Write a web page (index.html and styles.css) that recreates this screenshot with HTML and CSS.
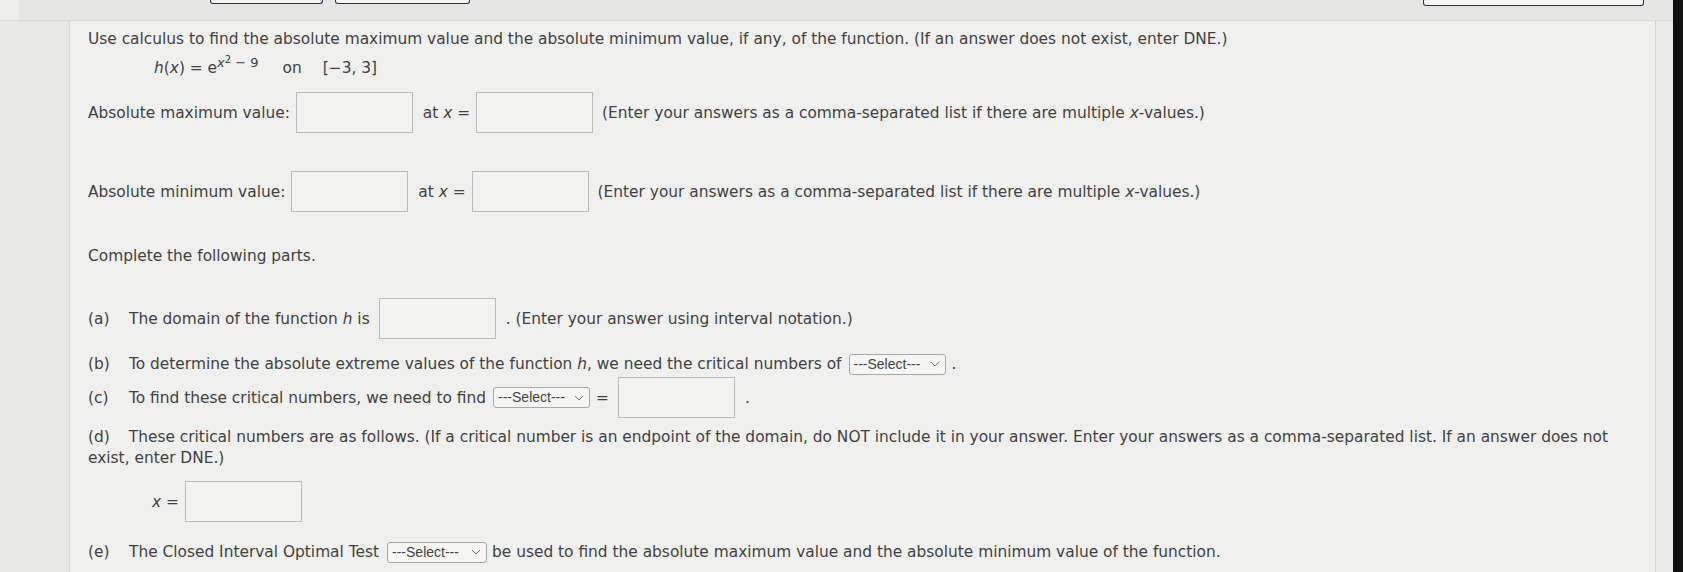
FILE: index.html
```html
<!DOCTYPE html>
<html lang="en">
<head>
<meta charset="utf-8">
<title>Absolute extrema</title>
<link rel="stylesheet" href="styles.css">
</head>
<body>
<div class="screen">
  <div class="topbar">
    <div class="tb-corner"></div>
    <div class="tb-btn tb-b1"></div>
    <div class="tb-btn tb-b2"></div>
    <div class="tb-spacer"></div>
    <div class="tb-btn tb-b3"></div>
    <div class="tb-end"></div>
  </div>
  <div class="main">
    <div class="leftcol"></div>
    <div class="panel">
      <p class="line intro">Use calculus to find the absolute maximum value and the absolute minimum value, if any, of the function. (If an answer does not exist, enter DNE.)</p>
      <p class="line formula"><span class="math"><i>h</i>(<i>x</i>) = e<sup><i>x</i><sup class="sup2">2</sup> − 9</sup></span><span class="on">on</span><span class="interval">[−3, 3]</span></p>

      <div class="row row-max">
        <span class="lbl">Absolute maximum value:</span>
        <span class="ans ans-first"></span>
        <span class="atx">at <i>x</i> =</span>
        <span class="ans"></span>
        <span class="note">(Enter your answers as a comma-separated list if there are multiple <i>x</i>-values.)</span>
      </div>

      <div class="row row-min">
        <span class="lbl">Absolute minimum value:</span>
        <span class="ans ans-first"></span>
        <span class="atx">at <i>x</i> =</span>
        <span class="ans"></span>
        <span class="note">(Enter your answers as a comma-separated list if there are multiple <i>x</i>-values.)</span>
      </div>

      <p class="line complete">Complete the following parts.</p>

      <div class="part part-a">
        <span class="tag">(a)</span>
        <span>The domain of the function <i>h</i> is</span>
        <span class="ans"></span>
        <span>. (Enter your answer using interval notation.)</span>
      </div>

      <div class="part part-b">
        <span class="tag">(b)</span>
        <span>To determine the absolute extreme values of the function <i>h</i>, we need the critical numbers of</span>
        <span class="sel"><span class="sel-text">---Select---</span><svg class="chev" viewBox="0 0 10 6" width="10" height="6"><path d="M1 1 L5 5 L9 1" fill="none" stroke="#777" stroke-width="1"/></svg></span>
        <span>.</span>
      </div>

      <div class="part part-c">
        <span class="tag">(c)</span>
        <span>To find these critical numbers, we need to find</span>
        <span class="sel"><span class="sel-text">---Select---</span><svg class="chev" viewBox="0 0 10 6" width="10" height="6"><path d="M1 1 L5 5 L9 1" fill="none" stroke="#777" stroke-width="1"/></svg></span>
        <span>=</span>
        <span class="ans"></span>
        <span class="dot">.</span>
      </div>

      <div class="part-d"><span class="tag-d">(d)</span>These critical numbers are as follows. (If a critical number is an endpoint of the domain, do NOT include it in your answer. Enter your answers as a comma-separated list. If an answer does not exist, enter DNE.)</div>

      <div class="row row-x">
        <span><i>x</i> =</span>
        <span class="ans"></span>
      </div>

      <div class="part part-e">
        <span class="tag">(e)</span>
        <span>The Closed Interval Optimal Test</span>
        <span class="sel"><span class="sel-text">---Select---</span><svg class="chev" viewBox="0 0 10 6" width="10" height="6"><path d="M1 1 L5 5 L9 1" fill="none" stroke="#777" stroke-width="1"/></svg></span>
        <span>be used to find the absolute maximum value and the absolute minimum value of the function.</span>
      </div>
    </div>
    <div class="rightstrip"></div>
  </div>
</div>
<div class="bezel"></div>
</body>
</html>
```

FILE: styles.css
```css
html, body {
  margin: 0;
  padding: 0;
  height: 100%;
}
body {
  display: flex;
  width: 1683px;
  height: 572px;
  overflow: hidden;
  background: #efefed;
  font-family: "DejaVu Sans", Verdana, sans-serif;
  font-size: 15.4px;
  color: #424242;
}
.screen {
  flex: 1;
  display: flex;
  flex-direction: column;
  min-width: 0;
}
.bezel {
  width: 10px;
  background: #111;
}

/* top toolbar */
.topbar {
  height: 20px;
  display: flex;
  align-items: flex-start;
  background: #e6e6e4;
  border-bottom: 1px solid #d9d9d7;
}
.tb-corner {
  width: 19px;
  height: 20px;
  background: #ededeb;
}
.tb-btn {
  height: 3px;
  background: #f6f6f4;
  border: 1px solid #2e2e62;
  border-top: none;
  border-radius: 0 0 3px 3px;
}
.tb-b1 {
  margin-left: 191px;
  width: 111px;
}
.tb-b2 {
  margin-left: 12px;
  width: 133px;
}
.tb-spacer {
  flex: 1;
}
.tb-b3 {
  width: 219px;
  height: 5px;
  border-width: 1.5px;
}
.tb-end {
  width: 29px;
}

/* main area */
.main {
  flex: 1;
  display: flex;
}
.leftcol {
  width: 69px;
  background: #e8e8e6;
  border-right: 1px solid #dadad8;
}
.panel {
  flex: 1;
  padding-left: 18px;
  background: #f0f0ee;
}
.rightstrip {
  width: 17px;
  background: #ebebe9;
  border-left: 1px solid #d6d6d4;
}

i {
  font-style: italic;
}
.line {
  margin: 0;
  line-height: 22px;
}
.intro {
  margin-top: 7px;
}
.formula {
  margin-top: 7px;
  padding-left: 66px;
  display: flex;
  align-items: baseline;
}
.math sup {
  font-size: 13px;
  vertical-align: 6px;
  line-height: 0;
}
.math .sup2 {
  font-size: 10px;
  vertical-align: 4px;
}
.on {
  margin-left: 24px;
}
.interval {
  margin-left: 21px;
}

.row {
  display: flex;
  align-items: center;
}
.ans {
  display: inline-block;
  width: 117px;
  height: 41px;
  box-sizing: border-box;
  border: 1px solid #bdbdbb;
  background: #f3f3f1;
}
.row-max {
  margin-top: 13px;
}
.row-min {
  margin-top: 38px;
}
.ans-first {
  margin-left: 6px;
}
.atx {
  margin-left: 10px;
  margin-right: 6px;
}
.note {
  margin-left: 9px;
}
.complete {
  margin-top: 33px;
}

.part {
  display: flex;
  align-items: center;
  line-height: 22px;
}
.tag {
  display: inline-block;
  width: 41px;
}
.part-a {
  margin-top: 31px;
}
.part-a .ans {
  margin: 0 10px 0 9px;
}
.part-b {
  margin-top: 14px;
}
.part-b .sel {
  margin: 0 6px 0 7px;
}
.part-c {
  margin-top: 2px;
}
.part-c .sel {
  margin: 0 6px 0 7px;
}
.part-c .ans {
  margin-left: 9px;
}
.part-c .dot {
  margin-left: 10px;
}
.sel {
  display: inline-flex;
  align-items: center;
  justify-content: space-between;
  width: 97px;
  height: 21px;
  box-sizing: border-box;
  padding: 0 5px 0 4px;
  border: 1px solid #a9a9a7;
  border-radius: 3px;
  background: #f6f6f4;
  font-family: "Liberation Sans", Arial, sans-serif;
  font-size: 14px;
  line-height: 19px;
  color: #444;
}
.chev {
  display: block;
}
.part-d {
  margin: 9px 14px 0 0;
  line-height: 21px;
}
.tag-d {
  margin-right: 19px;
}
.row-x {
  margin-top: 12px;
  padding-left: 64px;
}
.row-x .ans {
  margin-left: 6px;
}
.part-e {
  margin-top: 19px;
}
.part-e .sel {
  width: 100px;
  margin: 0 5px 0 8px;
}
```
